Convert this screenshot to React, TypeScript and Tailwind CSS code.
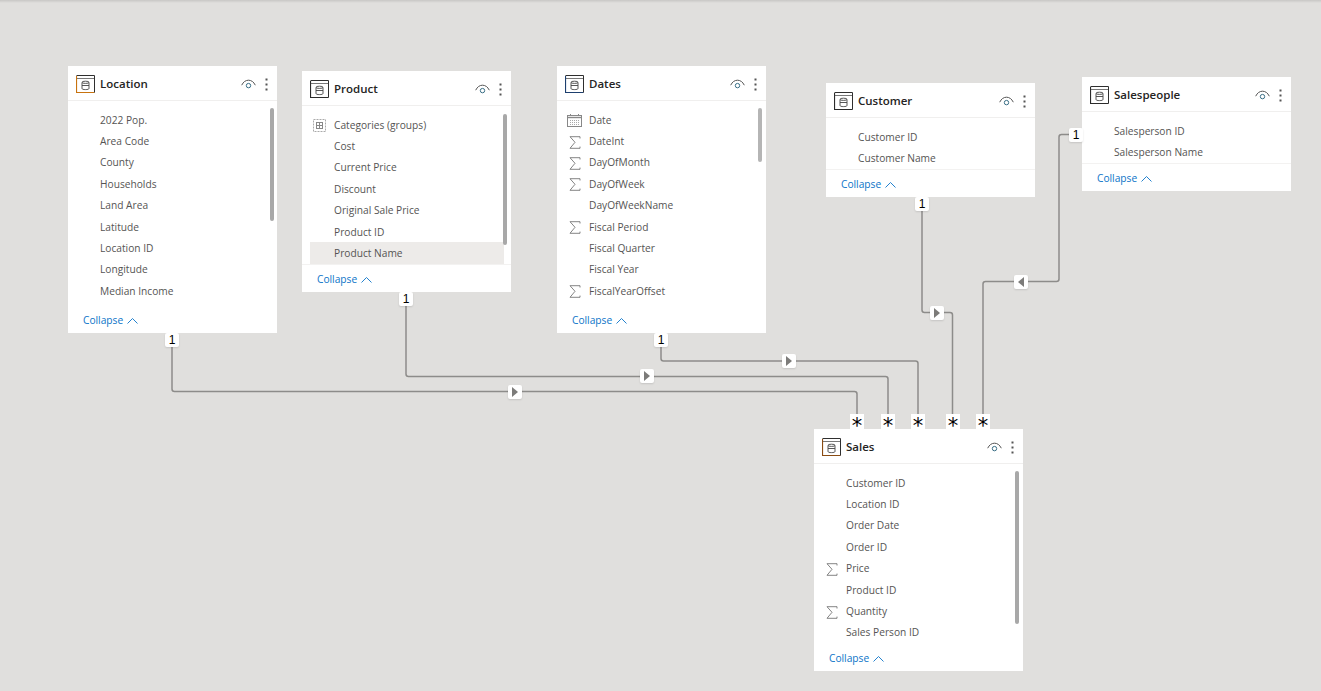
type RowIcon = "sum" | "calendar" | "hierarchy";

interface Row {
  name: string;
  icon?: RowIcon;
  active?: boolean;
}

interface TableProps {
  title: string;
  rows: Row[];
  className: string;
  iconClass: string;
  scrollClass?: string;
  divider?: boolean;
}

const plain = (names: string[]): Row[] => names.map((name) => ({ name }));

function TableIcon({ className }: { className: string }) {
  return (
    <svg width="19" height="18" viewBox="0 0 19 18" fill="none" className={className}>
      <path d="M.5 1v16.500h18" stroke="currentColor" strokeWidth="1.2" />
      <path d="M.5.500h18v17" stroke="#2f2f2f" strokeWidth="1" />
      <path d="M1 3.500h17" stroke="#555" strokeWidth="0.8" />
      <ellipse cx="9.500" cy="7.300" rx="3.500" ry="1.100" stroke="#444" strokeWidth="0.9" />
      <path d="M6 7.300v6.200c0 .7 1.500 1.100 3.500 1.100s3.500-.4 3.500-1.100V7.300M6 10.500h7" stroke="#444" strokeWidth="0.9" />
    </svg>
  );
}

function Eye() {
  return (
    <svg width="15" height="11" viewBox="0 0 15 11" fill="none">
      <path d="M.7 6.200C2.200 3 4.600 1.200 7.500 1.200s5.300 1.800 6.800 5" stroke="#555" strokeWidth="1" />
      <circle cx="7.500" cy="6.600" r="2.200" stroke="#3a6f86" strokeWidth="1" />
    </svg>
  );
}

function Dots() {
  return (
    <svg width="3" height="13" viewBox="0 0 3 13">
      <rect x="0.500" y="0.500" width="2" height="2" fill="#555" />
      <rect x="0.500" y="5.500" width="2" height="2" fill="#555" />
      <rect x="0.500" y="10.500" width="2" height="2" fill="#555" />
    </svg>
  );
}

function FieldIcon({ icon }: { icon: RowIcon }) {
  if (icon === "sum") {
    return (
      <svg width="12" height="13" viewBox="0 0 12 13" fill="none">
        <path d="M11 2.500V.7H1l5 5.600-5 6h10v-1.700" stroke="#666" strokeWidth="0.8" />
      </svg>
    );
  }
  if (icon === "calendar") {
    return (
      <svg width="15" height="13" viewBox="0 0 15 13" fill="none">
        <rect x="0.500" y="1.500" width="14" height="11" stroke="#888" />
        <path d="M1 3.500h13" stroke="#888" strokeWidth="1.400" />
        <path d="M3.500 0v2M11.500 0v2" stroke="#888" />
        <path d="M3 6.500h9M3 8.500h9M3 10.500h9" stroke="#aaa" strokeDasharray="1 1" />
      </svg>
    );
  }
  return (
    <svg width="13" height="13" viewBox="0 0 13 13" fill="none">
      <rect x="0.500" y="0.500" width="12" height="12" stroke="#aaa" strokeDasharray="2 1" />
      <rect x="3.500" y="3.500" width="6" height="6" stroke="#888" />
      <path d="M6.500 3.500v6M3.500 6.500h6" stroke="#888" />
    </svg>
  );
}

function Table({ title, rows, className, iconClass, scrollClass, divider }: TableProps) {
  return (
    <div className={`absolute w-[209px] flex flex-col bg-white ${className}`}>
      <div className="h-[35px] shrink-0 flex items-center pt-[2px] pl-2 pr-[9px] border-b border-[#f0efee]">
        <TableIcon className={iconClass} />
        <span className="ml-[5px] flex-1 text-[11.5px] font-semibold text-[#252423]">{title}</span>
        <Eye />
        <span className="ml-[9px] flex">
          <Dots />
        </span>
      </div>
      <div className={`pt-2 pl-2 pr-[7px] ${divider ? "border-b border-[#f3f2f1]" : ""}`}>
        {rows.map((r) => (
          <div
            key={r.name}
            className={`h-[21.4px] flex items-center pt-[1px] pl-6 text-[10.2px] text-[#555453] relative ${r.active ? "bg-[#edebe9]" : ""}`}
          >
            {r.icon && (
              <span className="absolute left-[2px] top-[1px] h-full w-[15px] flex items-center justify-center">
                <FieldIcon icon={r.icon} />
              </span>
            )}
            {r.name}
          </div>
        ))}
      </div>
      <div className="mt-auto h-6 flex items-center pl-[15px] text-[10.2px] text-[#0b74c8]">
        Collapse
        <svg width="11" height="6" viewBox="0 0 11 6" fill="none" className="ml-[4px]">
          <path d="M.5 5.500l5-5 5 5" stroke="#0b74c8" strokeWidth="0.9" />
        </svg>
      </div>
      {scrollClass && <div className={`absolute w-1 rounded-full ${scrollClass}`} />}
    </div>
  );
}

function One({ className }: { className: string }) {
  return (
    <div className={`absolute w-[14px] h-[14px] flex items-center justify-center bg-white rounded-[2px] shadow-[0_1px_2px_rgba(0,0,0,0.12)] font-['Liberation_Sans',sans-serif] text-[12px] text-black ${className}`}>
      1
    </div>
  );
}

function Star({ className }: { className: string }) {
  return (
    <div className={`absolute top-[414px] w-[14px] h-[15px] flex items-start justify-center bg-white font-['DejaVu_Sans',sans-serif] text-[21px] leading-[25px] text-black ${className}`}>
      *
    </div>
  );
}

function Arrow({ className, left }: { className: string; left?: boolean }) {
  return (
    <div className={`absolute w-[14px] h-[14px] flex items-center justify-center bg-white rounded-[2px] shadow-[0_1px_2px_rgba(0,0,0,0.12)] ${className}`}>
      <svg width="6" height="10" viewBox="0 0 6 10">
        <path d={left ? "M6 0v10L0 5z" : "M0 0v10l6-5z"} fill="#7c7b79" />
      </svg>
    </div>
  );
}

const location = plain(["2022 Pop.", "Area Code", "County", "Households", "Land Area", "Latitude", "Location ID", "Longitude", "Median Income"]);

const product: Row[] = [
  { name: "Categories (groups)", icon: "hierarchy" },
  ...plain(["Cost", "Current Price", "Discount", "Original Sale Price", "Product ID"]),
  { name: "Product Name", active: true },
];

const dates: Row[] = [
  { name: "Date", icon: "calendar" },
  { name: "DateInt", icon: "sum" },
  { name: "DayOfMonth", icon: "sum" },
  { name: "DayOfWeek", icon: "sum" },
  { name: "DayOfWeekName" },
  { name: "Fiscal Period", icon: "sum" },
  { name: "Fiscal Quarter" },
  { name: "Fiscal Year" },
  { name: "FiscalYearOffset", icon: "sum" },
];

const sales: Row[] = [
  ...plain(["Customer ID", "Location ID", "Order Date", "Order ID"]),
  { name: "Price", icon: "sum" },
  { name: "Product ID" },
  { name: "Quantity", icon: "sum" },
  { name: "Sales Person ID" },
];

export default function App() {
  return (
    <div className="relative w-[1321px] h-[691px] overflow-hidden bg-[#e0dfdd] font-['Open_Sans','Noto_Sans',sans-serif]">
      <div className="h-[3px] bg-linear-to-b from-[#c8c7c5] to-[#e0dfdd]" />

      <svg width="1321" height="691" className="absolute left-0 top-0" fill="none" stroke="#8d8c8a" strokeWidth="1.500">
        <path d="M172 333V389q0 2.500 2.500 2.500H854.500q2.500 0 2.500 2.500V416" />
        <path d="M406 292V374q0 2.500 2.500 2.500H885.500q2.500 0 2.500 2.500V416" />
        <path d="M661 333V358.500q0 2.500 2.500 2.500H915.500q2.500 0 2.500 2.500V416" />
        <path d="M922 197V310q0 2.500 2.500 2.500H950q2.500 0 2.500 2.500V416" />
        <path d="M1076 134.500H1061.500q-2.500 0-2.500 2.500V279q0 2.500-2.500 2.500H985.500q-2.500 0-2.500 2.500V416" />
      </svg>

      <Table title="Location" rows={location} className="left-[68px] top-[66px] h-[267px]" iconClass="text-[#c8730f]" scrollClass="right-[3px] top-[42px] h-[113px] bg-[#a8a8a8]" />
      <Table title="Product" rows={product} className="left-[302px] top-[71px] h-[221px]" iconClass="text-[#2b2b2b]" scrollClass="right-[4px] top-[43px] h-[131px] bg-[#a8a8a8]" divider />
      <Table title="Dates" rows={dates} className="left-[557px] top-[66px] h-[267px]" iconClass="text-[#1d3f6e]" scrollClass="right-[4px] top-[42px] h-[54px] bg-[#b5b5b5]" />
      <Table title="Customer" rows={plain(["Customer ID", "Customer Name"])} className="left-[826px] top-[83px] h-[114px]" iconClass="text-[#2b2b2b]" divider />
      <Table title="Salespeople" rows={plain(["Salesperson ID", "Salesperson Name"])} className="left-[1082px] top-[77px] h-[114px]" iconClass="text-[#2b2b2b]" divider />
      <Table title="Sales" rows={sales} className="left-[814px] top-[429px] h-[242px]" iconClass="text-[#8a4b12]" scrollClass="right-[4px] top-[42px] h-[153px] bg-[#a8a8a8]" />

      <One className="left-[165px] top-[333px]" />
      <One className="left-[399px] top-[292px]" />
      <One className="left-[654px] top-[333px]" />
      <One className="left-[915px] top-[197px]" />
      <One className="left-[1069px] top-[128px]" />

      <Arrow className="left-[508px] top-[385px]" />
      <Arrow className="left-[640px] top-[369px]" />
      <Arrow className="left-[782px] top-[354px]" />
      <Arrow className="left-[930px] top-[306px]" />
      <Arrow className="left-[1014px] top-[275px]" left />

      <Star className="left-[850px]" />
      <Star className="left-[881px]" />
      <Star className="left-[911px]" />
      <Star className="left-[946px]" />
      <Star className="left-[976px]" />
    </div>
  );
}
